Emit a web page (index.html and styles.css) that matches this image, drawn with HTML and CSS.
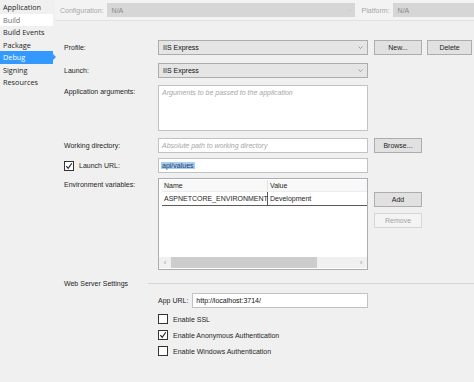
FILE: index.html
```html
<!DOCTYPE html>
<html lang="en">
<head>
    <meta charset="UTF-8">
    <title>Debug</title>
    <link rel="stylesheet" href="styles.css">
</head>
<body>
    <div class="window">
        <!-- Sidebar -->
        <nav class="sidebar">
            <div class="nav-item">Application</div>
            <div class="nav-item hover">Build</div>
            <div class="nav-item">Build Events</div>
            <div class="nav-item">Package</div>
            <div class="nav-item active">Debug</div>
            <div class="nav-item">Signing</div>
            <div class="nav-item">Resources</div>
        </nav>

        <main class="main">
            <!-- Toolbar -->
            <div class="toolbar">
                <span class="tb-label">Configuration:</span>
                <div class="tb-select config">
                    <span>N/A</span>
                    <svg class="chev" width="5" height="3" viewBox="0 0 5 3"><path d="M0.5 0.5 L2.5 2.5 L4.5 0.5" fill="none" stroke="#c4c4c4" stroke-width="0.8"/></svg>
                </div>
                <span class="tb-label">Platform:</span>
                <div class="tb-select platform"><span>N/A</span></div>
            </div>

            <div class="content">
                <div class="row r-profile">
                    <span class="lbl">Profile:</span>
                    <div class="select">
                        <span>IIS Express</span>
                        <svg class="chev" width="5" height="3" viewBox="0 0 5 3"><path d="M0.5 0.5 L2.5 2.5 L4.5 0.5" fill="none" stroke="#8a8a8a" stroke-width="0.8"/></svg>
                    </div>
                    <button class="btn">New...</button>
                    <button class="btn btn-delete">Delete</button>
                </div>

                <div class="row r-launch">
                    <span class="lbl">Launch:</span>
                    <div class="select">
                        <span>IIS Express</span>
                        <svg class="chev" width="5" height="3" viewBox="0 0 5 3"><path d="M0.5 0.5 L2.5 2.5 L4.5 0.5" fill="none" stroke="#8a8a8a" stroke-width="0.8"/></svg>
                    </div>
                </div>

                <div class="row r-args">
                    <span class="lbl top">Application arguments:</span>
                    <div class="textarea"><span class="placeholder">Arguments to be passed to the application</span></div>
                </div>

                <div class="row r-workdir">
                    <span class="lbl">Working directory:</span>
                    <div class="input"><span class="placeholder">Absolute path to working directory</span></div>
                    <button class="btn">Browse...</button>
                </div>

                <div class="row r-url">
                    <span class="lbl check-lbl">
                        <span class="checkbox checked">
                            <svg width="8" height="8" viewBox="0 0 8 8"><path d="M1.3 4.2 L3.2 6.3 L6.8 1.2" fill="none" stroke="#222" stroke-width="1.1"/></svg>
                        </span>
                        Launch URL:
                    </span>
                    <div class="input"><span class="selected">api/values</span></div>
                </div>

                <div class="row r-env">
                    <span class="lbl top">Environment variables:</span>
                    <div class="grid">
                        <div class="grid-head">
                            <span class="col-name">Name</span>
                            <span class="col-value">Value</span>
                        </div>
                        <div class="grid-row">
                            <span class="col-name">ASPNETCORE_ENVIRONMENT</span>
                            <span class="col-value">Development</span>
                        </div>
                        <div class="grid-fill"></div>
                        <div class="hscroll">
                            <span class="arrow">&lsaquo;</span>
                            <div class="track"><div class="thumb"></div></div>
                            <span class="arrow">&rsaquo;</span>
                        </div>
                    </div>
                    <div class="env-buttons">
                        <button class="btn">Add</button>
                        <button class="btn disabled">Remove</button>
                    </div>
                </div>

                <!-- Web server -->
                <div class="section-head">
                    <span>Web Server Settings</span>
                    <div class="rule"></div>
                </div>

                <div class="server">
                    <div class="app-url">
                        <span>App URL:</span>
                        <div class="input"><span>http://localhost:3714/</span></div>
                    </div>
                    <div class="check-row">
                        <span class="checkbox"></span>
                        Enable SSL
                    </div>
                    <div class="check-row">
                        <span class="checkbox checked">
                            <svg width="8" height="8" viewBox="0 0 8 8"><path d="M1.3 4.2 L3.2 6.3 L6.8 1.2" fill="none" stroke="#222" stroke-width="1.1"/></svg>
                        </span>
                        Enable Anonymous Authentication
                    </div>
                    <div class="check-row">
                        <span class="checkbox"></span>
                        Enable Windows Authentication
                    </div>
                </div>
            </div>
        </main>
    </div>
</body>
</html>
```

FILE: styles.css
```css
* {
    margin: 0;
    padding: 0;
    box-sizing: border-box;
}

body {
    width: 474px;
    height: 382px;
    overflow: hidden;
    background: #f0f0f0;
    font-family: 'Liberation Sans', Arial, sans-serif;
    font-size: 7px;
    color: #1e1e1e;
}

.window {
    display: flex;
    height: 382px;
}

/* Sidebar */
.sidebar {
    width: 55px;
    flex-shrink: 0;
    padding-top: 1px;
    background: #f0f0f0;
}

.nav-item {
    position: relative;
    width: 53px;
    height: 12.5px;
    line-height: 12.5px;
    padding-left: 3px;
    font-family: 'Open Sans', 'Noto Sans', sans-serif;
    font-size: 7.3px;
    color: #1e1e1e;
}

.nav-item.hover {
    background: #ffffff;
    color: #6d6d6d;
}

.nav-item.active {
    background: #3399ff;
    color: #ffffff;
}

.nav-item.active::after {
    content: '';
    position: absolute;
    right: -3px;
    top: 3px;
    border-left: 3px solid #3399ff;
    border-top: 3.25px solid transparent;
    border-bottom: 3.25px solid transparent;
}

/* Main */
.main {
    flex: 1;
    display: flex;
    flex-direction: column;
}

.toolbar {
    height: 21px;
    display: flex;
    align-items: center;
    padding-left: 5px;
    background: #f3f3f3;
    border-bottom: 1px solid #e2e2e2;
}

.tb-label {
    color: #a8a8a8;
    margin-right: 3px;
}

.tb-select {
    height: 14px;
    display: flex;
    align-items: center;
    padding-left: 5px;
    background: #d6d6d6;
    color: #8a8a8a;
}

.tb-select.config {
    width: 248px;
    margin-right: 7px;
    justify-content: space-between;
    padding-right: 3px;
}

.tb-select.platform {
    flex: 1;
}

.content {
    padding: 19px 0 0 9px;
}

.row {
    display: flex;
    align-items: center;
    margin-bottom: 8px;
}

.lbl {
    width: 94px;
    flex-shrink: 0;
    color: #1e1e1e;
}

.lbl.top {
    align-self: flex-start;
    padding-top: 3px;
}

.select {
    width: 210px;
    height: 15px;
    display: flex;
    align-items: center;
    justify-content: space-between;
    padding: 0 4px;
    background: #e5e5e5;
    border: 1px solid #acacac;
    color: #111;
}

.btn {
    height: 15px;
    width: 48px;
    margin-left: 6px;
    background: #e1e1e1;
    border: 1px solid #adadad;
    font-family: inherit;
    font-size: 7px;
    color: #1e1e1e;
}

.btn-delete {
    width: 45px;
    margin-left: 5px;
}

.btn.disabled {
    background: #f4f4f4;
    border-color: #d6d6d6;
    color: #a2a2a2;
}

.r-launch {
    margin-bottom: 7px;
}

.textarea {
    width: 210px;
    height: 46px;
    padding: 3px 3px;
    background: #ffffff;
    border: 1px solid #c2c2c2;
}

.r-args {
    align-items: flex-start;
    margin-bottom: 7px;
}

.input {
    width: 210px;
    height: 15px;
    display: flex;
    align-items: center;
    padding: 0 3px;
    background: #ffffff;
    border: 1px solid #c2c2c2;
}

.placeholder {
    color: #a6a6a6;
    font-style: italic;
}

.r-workdir {
    margin-bottom: 5px;
}

.r-url {
    margin-bottom: 5px;
}

.check-lbl {
    display: flex;
    align-items: center;
    gap: 5px;
}

.checkbox {
    width: 10px;
    height: 10px;
    display: flex;
    align-items: center;
    justify-content: center;
    background: #ffffff;
    border: 1px solid #333333;
    flex-shrink: 0;
}

.selected {
    background: #a6cdf2;
    color: #1b3c63;
    padding: 0 1px;
    margin-left: -1px;
}

/* Environment grid */
.r-env {
    align-items: flex-start;
    margin-bottom: 0;
}

.grid {
    width: 210px;
    height: 92px;
    display: flex;
    flex-direction: column;
    padding: 1px 0 1px 3px;
    background: #ffffff;
    border: 1px solid #abadb3;
}

.grid-head,
.grid-row {
    display: flex;
    height: 12px;
    align-items: center;
}

.grid-head {
    background: #f8f8f8;
    border-bottom: 1px solid #ededed;
}

.grid-row {
    height: 14px;
    border-bottom: 1px solid #5a5a5a;
}

.col-name {
    width: 106px;
    padding-left: 2px;
    height: 100%;
    display: flex;
    align-items: center;
}

.grid-row .col-name {
    border-right: 1px solid #5a5a5a;
}

.grid-head .col-name {
    border-right: 1px solid #e4e4e4;
}

.col-value {
    padding-left: 2px;
}

.grid-fill {
    flex: 1;
}

.hscroll {
    height: 11px;
    display: flex;
    align-items: center;
    margin-left: -3px;
    background: #f0f0f0;
    color: #a0a0a0;
    font-size: 8px;
}

.hscroll .arrow {
    width: 12px;
    text-align: center;
}

.track {
    flex: 1;
    height: 100%;
}

.thumb {
    width: 146px;
    height: 100%;
    background: #cdcdcd;
}

.env-buttons {
    display: flex;
    flex-direction: column;
    gap: 6px;
    padding-top: 14px;
}

/* Web server settings */
.section-head {
    display: flex;
    align-items: center;
    margin-top: 10px;
}

.section-head span {
    width: 84px;
    flex-shrink: 0;
}

.section-head .rule {
    flex: 1;
    height: 1px;
    background: #d7d7d7;
}

.server {
    padding: 6px 0 0 94px;
    display: flex;
    flex-direction: column;
    gap: 6px;
}

.app-url {
    display: flex;
    align-items: center;
    gap: 4px;
}

.app-url .input {
    width: 176px;
    color: #111;
}

.check-row {
    display: flex;
    align-items: center;
    gap: 5px;
    height: 10px;
}
```
